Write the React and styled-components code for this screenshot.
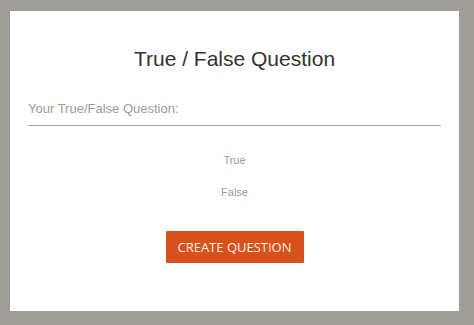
import React from 'react'
import styled, { createGlobalStyle } from 'styled-components'

const GlobalStyle = createGlobalStyle`
  html, body {
    margin: 0;
    padding: 0;
    background: #a09c98;
  }
  body {
    font-family: 'Liberation Sans', Arial, sans-serif;
  }
`

const Page = styled.div`
  width: 474px;
  height: 325px;
  padding: 11px 15px 14px 10px;
  box-sizing: border-box;
`

const Card = styled.section`
  background: #fff;
  height: 300px;
  display: flex;
  flex-direction: column;
  align-items: center;
  padding: 0 18px;
`

const Title = styled.h2`
  margin: 36px 0 0;
  font-size: 21px;
  font-weight: normal;
  color: #333;
  line-height: 24px;
`

const Field = styled.input`
  align-self: stretch;
  margin-top: 20px;
  border: none;
  border-bottom: 1px solid #aaa;
  outline: none;
  padding: 0;
  height: 34px;
  font-family: 'Liberation Sans', Arial, sans-serif;
  font-size: 13px;
  color: #333;
  background: transparent;
  &::placeholder {
    color: #9b9b9b;
  }
`

const Options = styled.div`
  margin-top: 27px;
  display: flex;
  flex-direction: column;
  align-items: center;
  gap: 18px;
`

const Option = styled.label`
  font-size: 11px;
  line-height: 14px;
  color: #999;
`

const Button = styled.button`
  margin-top: 32px;
  width: 138px;
  height: 32px;
  border: none;
  border-radius: 1px;
  background: #d9501b;
  color: #fff6ee;
  font-family: 'Open Sans', sans-serif;
  font-size: 13px;
  text-transform: uppercase;
  cursor: pointer;
`

export default function App() {
  return (
    <>
      <GlobalStyle />
      <Page>
        <Card>
          <Title>True / False Question</Title>
          <Field placeholder="Your True/False Question:" />
          <Options>
            <Option>True</Option>
            <Option>False</Option>
          </Options>
          <Button>Create Question</Button>
        </Card>
      </Page>
    </>
  )
}
